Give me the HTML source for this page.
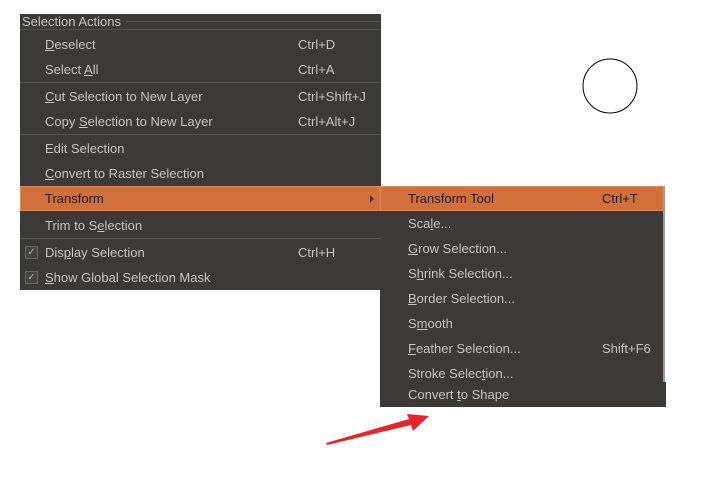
<!DOCTYPE html>
<html><head><style>
body{margin:0;width:706px;height:485px;background:#fff;position:relative;overflow:hidden;font-family:"Liberation Sans",sans-serif;font-size:13px;}
.m{position:absolute;background:#3b3a38;}
.t{position:absolute;color:#c4c4c4;white-space:nowrap;line-height:16px;}
.s{position:absolute;height:1px;background:#55534f;}
.hl{position:absolute;background:#d2703b;border:1px solid #e08a55;box-sizing:border-box;}
.d{color:#1e1a17;}
u{text-decoration:underline;}
.cb{position:absolute;width:11px;height:11px;border:1px solid #6a6866;background:#454341;color:#b0b0b0;font-size:10px;line-height:11px;text-align:center;}
</style></head><body>
<div class="m" style="left:20px;top:14px;width:361px;height:276px;"></div>
<div class="m" style="left:380px;top:186px;width:283px;height:196px;box-shadow:2px 0 0 #9a9a9a"></div>
<div class="m" style="left:380px;top:382px;width:286px;height:25px;"></div>
<div class="t" style="left:22px;top:14px;">Selection Actions</div>
<div class="s" style="left:126px;top:21px;width:254px;background:#5a5854"></div>
<div class="s" style="left:20px;top:29px;width:361px;"></div>
<div class="t" style="left:45px;top:37px;"><u>D</u>eselect</div><div class="t" style="left:298px;top:37px;">Ctrl+D</div>
<div class="t" style="left:45px;top:62px;">Select <u>A</u>ll</div><div class="t" style="left:298px;top:62px;">Ctrl+A</div>
<div class="s" style="left:20px;top:82px;width:361px;"></div>
<div class="t" style="left:45px;top:89px;"><u>C</u>ut Selection to New Layer</div><div class="t" style="left:298px;top:89px;">Ctrl+Shift+J</div>
<div class="t" style="left:45px;top:114px;">Copy <u>S</u>election to New Layer</div><div class="t" style="left:298px;top:114px;">Ctrl+Alt+J</div>
<div class="s" style="left:20px;top:134px;width:361px;"></div>
<div class="t" style="left:45px;top:141px;">Edit Selection</div>
<div class="t" style="left:45px;top:166px;"><u>C</u>onvert to Raster Selection</div>
<div class="hl" style="left:20px;top:186px;width:361px;height:25px;"></div>
<div class="t d" style="left:45px;top:191px;">Transform</div>
<div style="position:absolute;left:370px;top:195px;width:0;height:0;border-left:4px solid #4a3a30;border-top:4px solid transparent;border-bottom:4px solid transparent"></div>
<div class="t" style="left:45px;top:218px;">Trim to S<u>e</u>lection</div>
<div class="s" style="left:20px;top:238px;width:361px;"></div>
<div class="cb" style="left:25px;top:246px;">✓</div>
<div class="t" style="left:45px;top:245px;">Dis<u>p</u>lay Selection</div><div class="t" style="left:298px;top:245px;">Ctrl+H</div>
<div class="cb" style="left:25px;top:271px;">✓</div>
<div class="t" style="left:45px;top:270px;"><u>S</u>how Global Selection Mask</div>
<div class="hl" style="left:380px;top:186px;width:284px;height:25px;"></div>
<div class="t d" style="left:408px;top:191px;">Transform Tool</div><div class="t d" style="left:602px;top:191px;">Ctrl+T</div>
<div class="t" style="left:408px;top:216px;">Sca<u>l</u>e...</div>
<div class="t" style="left:408px;top:241px;"><u>G</u>row Selection...</div>
<div class="t" style="left:408px;top:266px;">S<u>h</u>rink Selection...</div>
<div class="t" style="left:408px;top:291px;"><u>B</u>order Selection...</div>
<div class="t" style="left:408px;top:316px;">S<u>m</u>ooth</div>
<div class="t" style="left:408px;top:341px;"><u>F</u>eather Selection...</div><div class="t" style="left:602px;top:341px;">Shift+F6</div>
<div class="t" style="left:408px;top:366px;">Stroke Selec<u>t</u>ion...</div>
<div class="t" style="left:408px;top:387px;">Convert <u>t</u>o Shape</div>
<svg style="position:absolute;left:0;top:0" width="706" height="485">
<circle cx="610" cy="86" r="27" fill="none" stroke="#000" stroke-width="1"/>
<polygon points="326,443 409,419 407,414 429,416 413,431 411,425 327,445" fill="#e8232a"/>
</svg>
</body></html>
